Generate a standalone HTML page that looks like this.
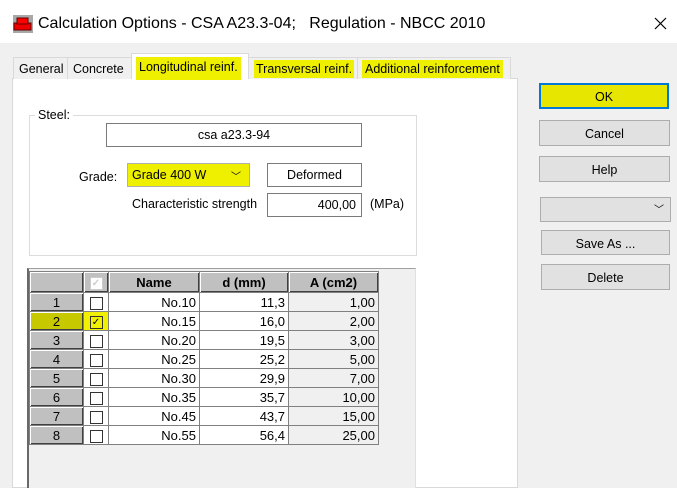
<!DOCTYPE html>
<html><head><style>
*{box-sizing:border-box;margin:0;padding:0}
body{width:677px;height:483px;overflow:hidden;background:#f0f0f0;font-family:"Liberation Sans",sans-serif;font-size:12px;color:#000;position:relative}
.a{position:absolute}
.title{left:0;top:0;width:677px;height:43px;background:#fff}
.tab{position:absolute;top:57px;height:22px;border:1px solid #d9d9d9;border-bottom:none;background:#f0f0f0;padding:4px 0 0 5px;font-size:12.5px}
.y{background:#eef000}
.box{position:absolute;border:1px solid #7a7a7a;background:#fff;font-size:12.5px}
.btn{position:absolute;border:1px solid #adadad;background:#e1e1e1;text-align:center;font-size:12.5px;line-height:26px}
table{border-collapse:collapse;position:absolute;left:29px;top:271px;font-family:"Liberation Sans",sans-serif;font-size:13px}
td{border:1px solid #808080;height:19px;padding:0 3px;text-align:right;background:#fff}
td.h{background:#c0c0c0;text-align:center;border:1px solid #808080;box-shadow:inset 1px 1px #fff,inset -1px -1px #404040}
th{background:#c0c0c0;border:1px solid #808080;height:21px;font-weight:bold;box-shadow:inset 1px 1px #fff,inset -1px -1px #404040}
td.g{background:#f0f0f0}
.cb{display:inline-block;width:13px;height:13px;border:1px solid #333;background:#fff;vertical-align:middle;font-size:10px;line-height:11px;text-align:center}
</style></head><body>
<div class="a title"></div>
<svg class="a" style="left:12px;top:14px" width="22" height="20"><rect x="1" y="1" width="20" height="18" fill="#a8a8a8"/><rect x="2" y="9" width="17" height="7" fill="#e00" stroke="#600"/><rect x="5" y="4" width="11" height="6" fill="#f00" stroke="#600"/></svg>
<div class="a" style="left:38px;top:15px;font-size:16px;color:#000">Calculation Options - CSA A23.3-04;&nbsp;&nbsp; Regulation - NBCC 2010</div>
<svg class="a" style="left:654px;top:17px" width="13" height="13"><path d="M1 1L12 12M12 1L1 12" stroke="#000" stroke-width="1.2"/></svg>

<div class="a" style="left:12px;top:78px;width:506px;height:410px;background:#fff;border:1px solid #d9d9d9"></div>
<div class="tab" style="left:13px;width:55px">General</div>
<div class="tab" style="left:67px;width:65px">Concrete</div>
<div class="tab" style="left:131px;top:53px;height:26px;width:118px;background:#fff;padding-top:6px;padding-left:4px"><span class="y" style="padding:3px 3px 6px 3px">Longitudinal reinf.</span></div>
<div class="tab" style="left:248px;width:110px"><span class="y" style="padding:2px 2px">Transversal reinf.</span></div>
<div class="tab" style="left:357px;width:154px;padding-left:4px"><span class="y" style="padding:2px 3px">Additional reinforcement</span></div>

<div class="a" style="left:29px;top:115px;width:388px;height:141px;border:1px solid #dcdcdc"></div>
<div class="a" style="left:35px;top:108px;background:#fff;padding:0 3px;font-size:12.5px">Steel:</div>
<div class="box" style="left:106px;top:123px;width:256px;height:24px;text-align:center;line-height:22px">csa a23.3-94</div>
<div class="a" style="left:79px;top:170px;font-size:12.5px">Grade:</div>
<div class="a y" style="left:127px;top:163px;width:123px;height:24px;border:1px solid #b0b0b0;padding:4px 0 0 4px;font-size:12.5px">Grade 400 W<span style="position:absolute;right:8px;top:4px;font-size:10px">﹀</span></div>
<div class="box" style="left:267px;top:163px;width:95px;height:24px;text-align:center;line-height:22px">Deformed</div>
<div class="a" style="left:132px;top:197px;font-size:12.5px">Characteristic strength</div>
<div class="box" style="left:267px;top:193px;width:95px;height:24px;text-align:right;line-height:22px;padding-right:5px">400,00</div>
<div class="a" style="left:370px;top:197px;font-size:12.5px">(MPa)</div>

<div class="a" style="left:27px;top:268px;width:389px;height:220px;background:#f0f0f0;border-top:1px solid #a0a0a0;border-left:2px solid #696969;border-right:1px solid #e0e0e0"></div>
<table>
<tr><th style="width:54px"></th><th style="width:25px"><span class="cb" style="border-color:#ccc;color:#ccc">✓</span></th><th style="width:91px">Name</th><th style="width:89px">d (mm)</th><th style="width:90px">A (cm2)</th></tr>
<tr><td class="h">1</td><td style="text-align:center"><span class="cb"></span></td><td>No.10</td><td>11,3</td><td class="g">1,00</td></tr>
<tr><td class="h" style="background:#c8c800">2</td><td style="text-align:center;background:#f0f000"><span class="cb" style="background:#f0f000">✓</span></td><td>No.15</td><td>16,0</td><td class="g">2,00</td></tr>
<tr><td class="h">3</td><td style="text-align:center"><span class="cb"></span></td><td>No.20</td><td>19,5</td><td class="g">3,00</td></tr>
<tr><td class="h">4</td><td style="text-align:center"><span class="cb"></span></td><td>No.25</td><td>25,2</td><td class="g">5,00</td></tr>
<tr><td class="h">5</td><td style="text-align:center"><span class="cb"></span></td><td>No.30</td><td>29,9</td><td class="g">7,00</td></tr>
<tr><td class="h">6</td><td style="text-align:center"><span class="cb"></span></td><td>No.35</td><td>35,7</td><td class="g">10,00</td></tr>
<tr><td class="h">7</td><td style="text-align:center"><span class="cb"></span></td><td>No.45</td><td>43,7</td><td class="g">15,00</td></tr>
<tr><td class="h">8</td><td style="text-align:center"><span class="cb"></span></td><td>No.55</td><td>56,4</td><td class="g">25,00</td></tr>
</table>

<div class="btn" style="left:539px;top:83px;width:130px;height:26px;border:2px solid #0078d7;background:#e6e600;line-height:25px">OK</div>
<div class="btn" style="left:539px;top:120px;width:131px;height:26px">Cancel</div>
<div class="btn" style="left:539px;top:156px;width:131px;height:26px">Help</div>
<div class="btn" style="left:540px;top:197px;width:131px;height:25px;text-align:right;padding-right:6px;font-size:10px">﹀</div>
<div class="btn" style="left:541px;top:230px;width:129px;height:25px">Save As ...</div>
<div class="btn" style="left:541px;top:264px;width:129px;height:26px">Delete</div>
</body></html>
